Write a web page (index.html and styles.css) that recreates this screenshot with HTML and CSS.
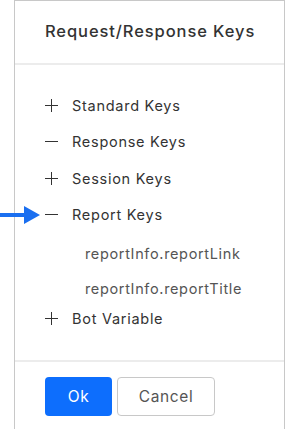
FILE: index.html
```html
<!DOCTYPE html>
<html>
<head>
<meta charset="utf-8">
<link rel="stylesheet" href="styles.css">
</head>
<body>
<div class="panel">
  <div class="header">Request/Response Keys</div>
  <div class="body">
    <ul class="tree">
      <li class="item"><span class="icon plus"></span><span class="label">Standard Keys</span></li>
      <li class="item"><span class="icon minus"></span><span class="label">Response Keys</span></li>
      <li class="item"><span class="icon plus"></span><span class="label">Session Keys</span></li>
      <li class="item pointed"><span class="icon minus"></span><span class="label">Report Keys</span>
        <svg class="arrow" width="42" height="20" viewBox="0 0 42 20"><path d="M0 8 H24 V1 L40 10 L24 19 V12 H0 Z" fill="#1a6ff0"/></svg>
      </li>
      <li class="child first">reportInfo.reportLink</li>
      <li class="child">reportInfo.reportTitle</li>
      <li class="item last"><span class="icon plus"></span><span class="label">Bot Variable</span></li>
    </ul>
  </div>
  <div class="footer">
    <button class="btn primary">Ok</button>
    <button class="btn secondary">Cancel</button>
  </div>
</div>
</body>
</html>
```
FILE: styles.css
```css
html, body { margin: 0; padding: 0; background: #fff; }
body { font-family: Inter, "Noto Sans", sans-serif; color: #333; }
.panel {
  margin-left: 14px;
  width: 269px;
  height: 428px;
  border: 1px solid #c8c8c8;
  border-bottom: none;
  display: flex;
  flex-direction: column;
}
.header {
  height: 60px;
  padding: 0 0 2px 30px;
  display: flex;
  align-items: center;
  font-size: 16.5px;
  letter-spacing: 0.055em;
  font-weight: 500;
  color: #333;
  border-bottom: 2px solid #ececec;
}
.body { flex: 1; padding: 22px 0 0 30px; }
.tree { list-style: none; margin: 0; padding: 0; }
.item {
  position: relative;
  height: 36.5px;
  display: flex;
  align-items: center;
  font-size: 14.5px;
  letter-spacing: 0.05em;
  color: #333;
}
.item.last { height: 25px; }
.icon { width: 13px; height: 13px; position: relative; margin-right: 14px; }
.icon::before, .plus::after {
  content: "";
  position: absolute;
  background: #333;
}
.icon::before { left: 0; right: 0; top: 6px; height: 1px; }
.plus::after { top: 0; bottom: 0; left: 6px; width: 1px; }
.child {
  height: 35px;
  display: flex;
  align-items: center;
  padding-left: 40px;
  font-size: 14.5px;
  letter-spacing: 0.045em;
  color: #555;
}
.child.first { margin-top: 2.5px; }
.arrow { position: absolute; left: -45px; top: 8px; }
.footer {
  height: 69px;
  border-top: 2px solid #ececec;
  padding: 15px 0 0 30px;
  box-sizing: border-box;
  display: flex;
  gap: 5px;
  align-items: flex-start;
}
.btn {
  font-family: Inter, "Noto Sans", sans-serif;
  font-size: 15.5px;
  letter-spacing: 0.04em;
  border-radius: 4px;
  height: 39px;
  cursor: pointer;
}
.primary { width: 67px; background: #0d6efd; color: #fff; border: none; }
.secondary { width: 98px; background: #fff; color: #555; border: 1px solid #c8c8c8; }
```
